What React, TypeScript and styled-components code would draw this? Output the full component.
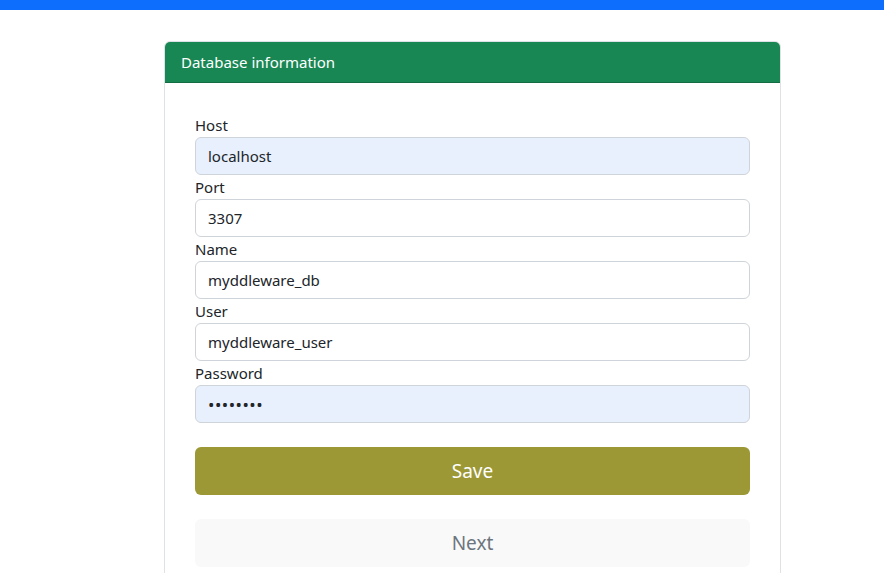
import React from 'react';
import styled, { createGlobalStyle } from 'styled-components';

const GlobalStyle = createGlobalStyle`
  * {
    box-sizing: border-box;
  }

  body {
    margin: 0;
    background: #ffffff;
    color: #212529;
    font-family: 'Noto Sans', 'Open Sans', sans-serif;
    font-size: 16px;
    line-height: 24px;
  }
`;

const TopBar = styled.div`
  height: 10px;
  background: #0d6efd;
`;

const Page = styled.div`
  display: flex;
  padding: 31px 0 0 164px;
`;

const Card = styled.section`
  width: 617px;
  border: 1px solid #dee2e6;
  border-radius: 6px;
  overflow: hidden;
`;

const CardHeader = styled.header`
  padding: 8px 16px;
  background: #198754;
  color: #ffffff;
  border-bottom: 1px solid #146c43;
  font-size: 15px;
  line-height: 24px;
`;

const CardBody = styled.form`
  display: flex;
  flex-direction: column;
  padding: 30px 30px 30px 30px;
`;

const Field = styled.div`
  display: flex;
  flex-direction: column;
`;

const Label = styled.label`
  font-size: 15px;
  line-height: 24px;
`;

const Input = styled.input<{ $autofill?: boolean; $secret?: boolean }>`
  height: 38px;
  padding: 6px 12px;
  border: 1px solid #ced4da;
  border-radius: 6px;
  background: ${(p) => (p.$autofill ? '#e8f0fe' : '#ffffff')};
  color: #212529;
  font-family: inherit;
  font-size: ${(p) => (p.$secret ? '17px' : '15px')};
  letter-spacing: ${(p) => (p.$secret ? '0.5px' : 'normal')};
  outline: none;
`;

const Button = styled.button<{ $variant: 'save' | 'next' }>`
  height: 48px;
  margin-top: 24px;
  border: none;
  border-radius: 6px;
  font-family: inherit;
  font-size: 19px;
  line-height: 30px;
  background: ${(p) => (p.$variant === 'save' ? '#9c9836' : '#f9f9f9')};
  color: ${(p) => (p.$variant === 'save' ? '#ffffff' : '#6c757d')};
`;

const fields = [
  { label: 'Host', value: 'localhost', autofill: true },
  { label: 'Port', value: '3307' },
  { label: 'Name', value: 'myddleware_db' },
  { label: 'User', value: 'myddleware_user' },
  { label: 'Password', value: 'password', type: 'password', autofill: true },
];

const App: React.FC = () => (
  <>
    <GlobalStyle />
    <TopBar />
    <Page>
      <Card>
        <CardHeader>Database information</CardHeader>
        <CardBody onSubmit={(e) => e.preventDefault()}>
          {fields.map((f) => (
            <Field key={f.label}>
              <Label>{f.label}</Label>
              <Input
                type={f.type || 'text'}
                defaultValue={f.value}
                $autofill={f.autofill}
                $secret={f.type === 'password'}
              />
            </Field>
          ))}
          <Button type="submit" $variant="save">Save</Button>
          <Button type="button" $variant="next">Next</Button>
        </CardBody>
      </Card>
    </Page>
  </>
);

export default App;
